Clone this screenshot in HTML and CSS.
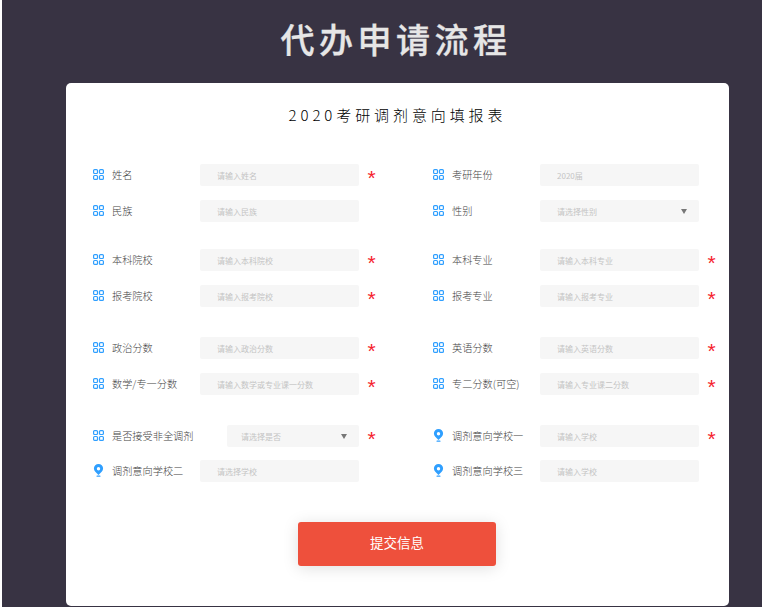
FILE: index.html
```html
<!DOCTYPE html>
<html lang="zh-CN">

<head>
  <meta charset="UTF-8">
  <title>代办申请流程</title>
  <link rel="stylesheet" href="styles.css">
</head>

<body>
  <svg class="defs" width="0" height="0">
    <symbol id="grid" viewBox="0 0 11 11">
      <g fill="none" stroke="currentColor" stroke-width="1.2">
        <rect x="0.6" y="0.6" width="3.9" height="3.9" rx="1" />
        <rect x="6.5" y="0.6" width="3.9" height="3.9" rx="1" />
        <rect x="0.6" y="6.5" width="3.9" height="3.9" rx="1" />
        <rect x="6.5" y="6.5" width="3.9" height="3.9" rx="1" />
      </g>
    </symbol>
    <symbol id="pin" viewBox="0 0 11 13">
      <path fill="currentColor" fill-rule="evenodd" d="M5.5 0a4.6 4.6 0 0 1 4.6 4.6c0 2.3-2.2 4.3-4.6 6.4C3.100 8.900.9 6.900.9 4.600A4.600 4.600 0 0 1 5.500 0zm0 3a1.700 1.700 0 1 0 0 3.400 1.700 1.700 0 0 0 0-3.400z" />
      <rect x="3.500" y="11.500" width="4" height="1.300" rx="0.600" fill="currentColor" />
    </symbol>
  </svg>

  <div class="page">
    <h1>代办申请流程</h1>

    <div class="card">
      <h2>2020考研调剂意向填报表</h2>

      <form class="form">
        <div class="group">
          <div class="field">
            <label><svg class="icon"><use href="#grid" /></svg>姓名</label>
            <input type="text" placeholder="请输入姓名">
            <span class="req">*</span>
          </div>
          <div class="field">
            <label><svg class="icon"><use href="#grid" /></svg>考研年份</label>
            <input type="text" placeholder="2020届">
          </div>
          <div class="field">
            <label><svg class="icon"><use href="#grid" /></svg>民族</label>
            <input type="text" placeholder="请输入民族">
          </div>
          <div class="field">
            <label><svg class="icon"><use href="#grid" /></svg>性别</label>
            <div class="select">请选择性别<i></i></div>
          </div>
        </div>

        <div class="group">
          <div class="field">
            <label><svg class="icon"><use href="#grid" /></svg>本科院校</label>
            <input type="text" placeholder="请输入本科院校">
            <span class="req">*</span>
          </div>
          <div class="field">
            <label><svg class="icon"><use href="#grid" /></svg>本科专业</label>
            <input type="text" placeholder="请输入本科专业">
            <span class="req">*</span>
          </div>
          <div class="field">
            <label><svg class="icon"><use href="#grid" /></svg>报考院校</label>
            <input type="text" placeholder="请输入报考院校">
            <span class="req">*</span>
          </div>
          <div class="field">
            <label><svg class="icon"><use href="#grid" /></svg>报考专业</label>
            <input type="text" placeholder="请输入报考专业">
            <span class="req">*</span>
          </div>
        </div>

        <div class="group">
          <div class="field">
            <label><svg class="icon"><use href="#grid" /></svg>政治分数</label>
            <input type="text" placeholder="请输入政治分数">
            <span class="req">*</span>
          </div>
          <div class="field">
            <label><svg class="icon"><use href="#grid" /></svg>英语分数</label>
            <input type="text" placeholder="请输入英语分数">
            <span class="req">*</span>
          </div>
          <div class="field">
            <label><svg class="icon"><use href="#grid" /></svg>数学/专一分数</label>
            <input type="text" placeholder="请输入数学或专业课一分数">
            <span class="req">*</span>
          </div>
          <div class="field">
            <label><svg class="icon"><use href="#grid" /></svg>专二分数(可空)</label>
            <input type="text" placeholder="请输入专业课二分数">
            <span class="req">*</span>
          </div>
        </div>

        <div class="group last">
          <div class="field">
            <label class="wide"><svg class="icon"><use href="#grid" /></svg>是否接受非全调剂</label>
            <div class="select short">请选择是否<i></i></div>
            <span class="req">*</span>
          </div>
          <div class="field">
            <label><svg class="icon"><use href="#pin" /></svg>调剂意向学校一</label>
            <input type="text" placeholder="请输入学校">
            <span class="req">*</span>
          </div>
          <div class="field">
            <label><svg class="icon"><use href="#pin" /></svg>调剂意向学校二</label>
            <input type="text" placeholder="请选择学校">
          </div>
          <div class="field">
            <label><svg class="icon"><use href="#pin" /></svg>调剂意向学校三</label>
            <input type="text" placeholder="请输入学校">
          </div>
        </div>

        <button type="button" class="submit">提交信息</button>
      </form>
    </div>
  </div>
</body>

</html>
```

FILE: styles.css
```css
* {
  box-sizing: border-box;
}

html,
body {
  height: 100%;
}

body {
  margin: 0;
  padding-left: 2px;
  background-color: #ffffff;
  font-family: "Noto Sans CJK SC", "Noto Sans", sans-serif;
  overflow: hidden;
}

.defs {
  position: absolute;
}

.page {
  height: 607px;
  background-color: #383343;
  padding: 17px 33px 0 64px;
}

h1 {
  margin: 0 0 20px;
  height: 46px;
  padding-right: 3px;
  line-height: 43px;
  text-align: center;
  font-size: 34px;
  font-weight: 500;
  letter-spacing: 4.5px;
  -webkit-text-stroke: 0.3px #e6e6e6;
  color: #e6e6e6;
}

.card {
  height: 523px;
  background-color: #ffffff;
  border-radius: 5px;
  padding: 20px 27px 0;
}

h2 {
  margin: 0 0 37px;
  text-align: center;
  font-size: 15px;
  line-height: 24px;
  font-weight: 300;
  letter-spacing: 3.9px;
  color: #000000;
}

.group {
  display: grid;
  grid-template-columns: 340px 270px;
  row-gap: 14px;
  margin-bottom: 30px;
}

.group:first-child {
  margin-bottom: 27px;
}

.group.last {
  row-gap: 13px;
  margin-bottom: 0;
}

.field {
  display: flex;
  align-items: center;
  height: 22px;
}

.field label {
  display: flex;
  align-items: center;
  flex: none;
  width: 107px;
  padding-bottom: 1px;
  font-size: 10.2px;
  font-weight: 300;
  color: #444444;
  white-space: nowrap;
}

.field label.wide {
  width: 134px;
}

.icon {
  width: 11px;
  height: 13px;
  margin-right: 8px;
  flex: none;
  color: #2f9fff;
}

.field input,
.select {
  display: flex;
  align-items: center;
  justify-content: space-between;
  flex: none;
  width: 159px;
  height: 22px;
  padding: 0 12px 0 17px;
  border: none;
  border-radius: 2px;
  outline: none;
  background-color: #f6f6f6;
  font-family: inherit;
  font-size: 8px;
  color: #c4c4c4;
}

.select.short {
  width: 132px;
  padding-left: 14px;
}

.select i {
  width: 0;
  height: 0;
  border-left: 3px solid transparent;
  border-right: 3px solid transparent;
  border-top: 5px solid #777777;
}

.field input::placeholder {
  color: #c4c4c4;
}

.req {
  margin-left: 8.5px;
  flex: none;
  font-family: "Liberation Sans", sans-serif;
  font-size: 21px;
  line-height: 22px;
  height: 17px;
  color: #f5222d;
}

.submit {
  display: block;
  width: 198px;
  height: 43.5px;
  margin: 40px 0 0 205px;
  padding: 0 0 3px;
  border: none;
  border-radius: 3px;
  background-color: #ee503c;
  box-shadow: 0 2px 16px rgba(0, 0, 0, 0.13);
  font-family: inherit;
  font-size: 13.5px;
  font-weight: 400;
  color: #ffffff;
}
```
